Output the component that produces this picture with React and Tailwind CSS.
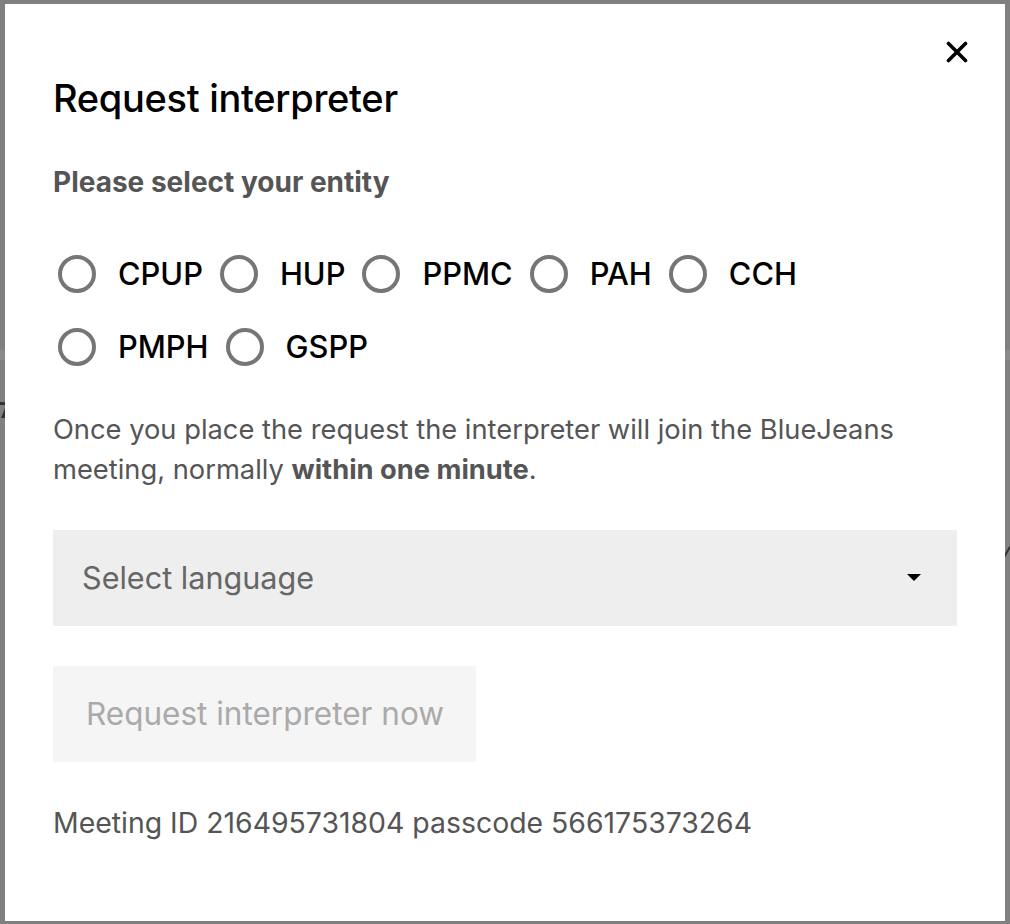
import React from "react";

const entitiesRow1 = ["CPUP", "HUP", "PPMC", "PAH", "CCH"];
const entitiesRow2 = ["PMPH", "GSPP"];

function Radio({ label }) {
  return (
    <label className="flex items-center mr-[12px] cursor-pointer">
      <span className="ml-[5px] w-[38px] h-[38px] rounded-full border-[4.5px] border-[#767676] bg-white box-border" />
      <span className="ml-[22px] text-[30.8px] leading-[38px] font-medium text-black">{label}</span>
    </label>
  );
}

export default function App() {
  return (
    <div
      className="relative w-[1010px] h-[924px] bg-[#808080] pt-[4px] pl-[5px] overflow-hidden"
      style={{ fontFamily: "Inter, 'Noto Sans', sans-serif" }}
    >
      {/* underlying page glimpses */}
      <div className="absolute left-0 top-[350px] w-full h-[10px] bg-[#8a8a8a]" />
      <div className="absolute left-0 top-[402px] w-[5px] h-[3px] bg-[#333]" />
      <div className="absolute left-[1px] top-[408px] w-0 h-0 border-l-[4px] border-l-transparent border-b-[10px] border-b-[#333]" />
      <div className="absolute left-[1006px] top-[546px] w-[2px] h-[12px] bg-[#333] rotate-[30deg]" />

      <div className="relative w-[1000px] h-[917px] bg-white pl-[48px] pr-[48px] pt-[74px]">
        <button className="absolute top-[32px] right-[32px] w-[32px] h-[32px] flex items-center justify-center">
          <svg width="22" height="22" viewBox="0 0 22 22">
            <path d="M2.5 2.5 L19.5 19.5 M19.5 2.5 L2.5 19.5" stroke="#000" strokeWidth="3.6" strokeLinecap="round" />
          </svg>
        </button>

        <h1 className="text-[38px] leading-[40px] font-medium text-black tracking-[-0.3px]">
          Request interpreter
        </h1>

        <h2 className="mt-[49px] text-[28px] leading-[30px] font-bold text-[#555]">
          Please select your entity
        </h2>

        <div className="mt-[58px] flex items-center">
          {entitiesRow1.map((e) => (
            <Radio key={e} label={e} />
          ))}
        </div>
        <div className="mt-[35px] flex items-center">
          {entitiesRow2.map((e) => (
            <Radio key={e} label={e} />
          ))}
        </div>

        <p className="mt-[44px] text-[27.3px] leading-[40px] text-[#555]">
          Once you place the request the interpreter will join the BlueJeans meeting, normally{" "}
          <strong className="font-bold">within one minute</strong>.
        </p>

        <div className="mt-[40px] h-[96px] bg-[#eeeeee] flex items-center justify-between pl-[29px] pr-[36px]">
          <span className="text-[30.6px] text-[#666]">Select language</span>
          <svg width="14" height="8" viewBox="0 0 14 8">
            <path d="M0 0 L14 0 L7 7 Z" fill="#000" />
          </svg>
        </div>

        <button className="mt-[40px] h-[96px] w-[423px] bg-[#f5f5f5] flex items-center pl-[33px]">
          <span className="text-[31.5px] text-[#aaa]">Request interpreter now</span>
        </button>

        <p className="mt-[41px] text-[28.4px] leading-[40px] text-[#555]">
          Meeting ID 216495731804 passcode 566175373264
        </p>
      </div>
    </div>
  );
}
